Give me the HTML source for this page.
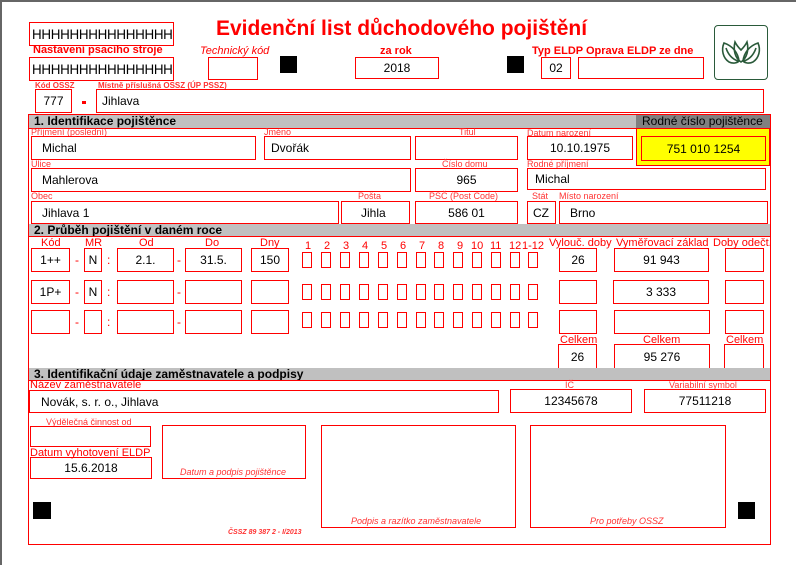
<!DOCTYPE html>
<html><head><meta charset="utf-8"><style>
*{margin:0;padding:0}
body{width:796px;height:565px;background:#fff;position:relative;overflow:hidden;font-family:"Liberation Sans",Arial,sans-serif}
div{position:absolute;box-sizing:border-box}
.b{border:1px solid #f00;font-size:12px;color:#000;display:flex;align-items:center}
.c{justify-content:center}
.p{padding-left:10px}
.l{font-size:9px;color:#f33;white-space:nowrap;line-height:9px}
.lb{font-size:11px;font-weight:bold;color:#f00;white-space:nowrap;line-height:11px}
.lr{font-size:11px;color:#f00;white-space:nowrap;line-height:11px}
.i{font-style:italic}
.k{background:#000}
.h{background:#c0c0c0;font-size:12px;font-weight:bold;color:#000;line-height:13px;padding-left:5px}
.s{border:1px solid #f00;width:10px;height:16px}
.d{color:#f00;font-size:12px}
.hr{height:1px;background:#f00}
</style></head><body>
<div style="left:0;top:0;width:796px;height:2px;background:#666"></div>
<div style="left:0;top:0;width:2px;height:565px;background:#666"></div>

<div class="b" style="left:29px;top:22px;width:145px;height:24px;font-size:13.4px;padding-left:2px;letter-spacing:-0.3px;overflow:hidden">HHHHHHHHHHHHHHHH</div>
<div class="lb" style="left:33px;top:45px">Nastavení psacího stroje</div>
<div class="b" style="left:29px;top:57px;width:145px;height:24px;font-size:13.4px;padding-left:2px;letter-spacing:-0.3px;overflow:hidden">HHHHHHHHHHHHHHHH</div>
<div style="left:216px;top:17px;font-size:21px;font-weight:bold;color:#f00;white-space:nowrap">Evidenční list důchodového pojištění</div>
<div class="lr i" style="left:200px;top:46px">Technický kód</div>
<div class="b" style="left:208px;top:57px;width:50px;height:23px"></div>
<div class="k" style="left:280px;top:56px;width:17px;height:17px"></div>
<div class="lb" style="left:380px;top:46px">za rok</div>
<div class="b c" style="left:355px;top:57px;width:84px;height:22px">2018</div>
<div class="k" style="left:507px;top:56px;width:17px;height:17px"></div>
<div class="lb" style="left:532px;top:46px">Typ ELDP Oprava ELDP ze dne</div>
<div class="b c" style="left:541px;top:57px;width:30px;height:22px">02</div>
<div class="b" style="left:578px;top:57px;width:126px;height:22px"></div>
<div style="left:714px;top:25px;width:54px;height:55px;border:1px solid #2a5a3a;border-radius:4px">
<svg width="52" height="53" viewBox="0 0 52 53"><g fill="none" stroke="#2a5a3a" stroke-width="1.6"><path d="M9 17 C6 24 8 32 14 36 C18 38 22 37 24 35 C23 27 18 20 9 17Z"/><path d="M43 17 C46 24 44 32 38 36 C34 38 30 37 28 35 C29 27 34 20 43 17Z"/><path d="M20 16 C18 24 20 32 26 36 C32 32 34 24 32 16 C30 20 28 22 26 24 C24 22 22 20 20 16Z"/><path d="M11 22 C13 28 17 33 23 35"/><path d="M41 22 C39 28 35 33 29 35"/></g></svg></div>

<div class="l" style="left:35px;top:81px;font-weight:bold;font-size:8px">Kód OSSZ</div>
<div class="l" style="left:98px;top:81px;font-weight:bold;font-size:8px">Místně příslušná OSSZ (ÚP PSSZ)</div>
<div class="b c" style="left:35px;top:89px;width:37px;height:24px">777</div>
<div style="left:82px;top:101px;width:4px;height:3px;background:#f00"></div>
<div class="b p" style="left:96px;top:89px;width:668px;height:24px;padding-left:5px">Jihlava</div>

<div style="left:28px;top:114px;width:743px;height:431px;border:1px solid #f00"></div>
<div class="h" style="left:29px;top:115px;width:741px;height:13px">1. Identifikace pojištěnce</div>
<div style="left:636px;top:115px;width:134px;height:13px;background:#808080;font-size:12px;color:#000;line-height:13px;padding-left:6px;white-space:nowrap">Rodné číslo pojištěnce</div>
<div class="hr" style="left:29px;top:128px;width:741px"></div>
<div style="left:636px;top:128px;width:134px;height:38px;background:#ff0;border:1px solid #f00"></div>
<div class="b c" style="left:641px;top:136px;width:125px;height:25px">751 010 1254</div>

<div class="l" style="left:31px;top:128px">Příjmení (poslední)</div>
<div class="l" style="left:264px;top:128px">Jméno</div>
<div class="l" style="left:459px;top:128px">Titul</div>
<div class="l" style="left:527px;top:129px">Datum narození</div>
<div class="b p" style="left:31px;top:136px;width:225px;height:24px">Michal</div>
<div class="b" style="left:264px;top:136px;width:147px;height:24px;padding-left:6px">Dvořák</div>
<div class="b" style="left:415px;top:136px;width:103px;height:24px"></div>
<div class="b c" style="left:527px;top:136px;width:106px;height:24px">10.10.1975</div>

<div class="l" style="left:31px;top:160px">Ulice</div>
<div class="l" style="left:442px;top:160px">Číslo domu</div>
<div class="l" style="left:527px;top:160px">Rodné příjmení</div>
<div class="b p" style="left:31px;top:168px;width:380px;height:24px">Mahlerova</div>
<div class="b c" style="left:415px;top:168px;width:103px;height:24px">965</div>
<div class="b" style="left:527px;top:168px;width:239px;height:22px;padding-left:7px">Michal</div>

<div class="l" style="left:31px;top:192px">Obec</div>
<div class="l" style="left:358px;top:192px">Pošta</div>
<div class="l" style="left:429px;top:192px">PSČ (Post Code)</div>
<div class="l" style="left:532px;top:192px">Stát</div>
<div class="l" style="left:559px;top:192px">Místo narození</div>
<div class="b p" style="left:31px;top:201px;width:308px;height:23px">Jihlava 1</div>
<div class="b" style="left:341px;top:201px;width:69px;height:23px;padding-left:19px">Jihla</div>
<div class="b c" style="left:415px;top:201px;width:103px;height:23px">586 01</div>
<div class="b" style="left:527px;top:201px;width:29px;height:23px;padding-left:5px">CZ</div>
<div class="b" style="left:559px;top:201px;width:209px;height:23px;padding-left:10px">Brno</div>

<div class="h" style="left:29px;top:224px;width:741px;height:12px;line-height:12px">2. Průběh pojištění v daném roce</div>
<div class="hr" style="left:29px;top:236px;width:741px"></div>
<div class="lr" style="left:41px;top:238px">Kód</div>
<div class="lr" style="left:85px;top:238px">MR</div>
<div class="lr" style="left:139px;top:238px">Od</div>
<div class="lr" style="left:205px;top:238px">Do</div>
<div class="lr" style="left:260px;top:238px">Dny</div>
<div id="nums"></div>
<div class="lr" style="left:549px;top:238px">Vylouč. doby</div>
<div class="lr" style="left:616px;top:238px">Vyměřovací základ</div>
<div class="lr" style="left:713px;top:238px">Doby odečt.</div>

<div class="b c" style="left:31px;top:248px;width:39px;height:24px">1++</div>
<div class="b c" style="left:31px;top:280px;width:39px;height:24px">1P+</div>
<div class="b" style="left:31px;top:310px;width:39px;height:24px"></div>
<div class="b c" style="left:84px;top:248px;width:18px;height:24px">N</div>
<div class="b c" style="left:84px;top:280px;width:18px;height:24px">N</div>
<div class="b" style="left:84px;top:310px;width:18px;height:24px"></div>
<div class="b c" style="left:117px;top:248px;width:57px;height:24px">2.1.</div>
<div class="b" style="left:117px;top:280px;width:57px;height:24px"></div>
<div class="b" style="left:117px;top:310px;width:57px;height:24px"></div>
<div class="b c" style="left:185px;top:248px;width:57px;height:24px">31.5.</div>
<div class="b" style="left:185px;top:280px;width:57px;height:24px"></div>
<div class="b" style="left:185px;top:310px;width:57px;height:24px"></div>
<div class="b c" style="left:251px;top:248px;width:38px;height:24px">150</div>
<div class="b" style="left:251px;top:280px;width:38px;height:24px"></div>
<div class="b" style="left:251px;top:310px;width:38px;height:24px"></div>
<div class="d" style="left:75px;top:253px">-</div><div class="d" style="left:75px;top:285px">-</div><div class="d" style="left:75px;top:315px">-</div>
<div class="d" style="left:107px;top:253px">:</div><div class="d" style="left:107px;top:285px">:</div><div class="d" style="left:107px;top:315px">:</div>
<div class="d" style="left:177px;top:253px">-</div><div class="d" style="left:177px;top:285px">-</div><div class="d" style="left:177px;top:315px">-</div>

<div class="b c" style="left:559px;top:248px;width:38px;height:24px">26</div>
<div class="b" style="left:559px;top:280px;width:38px;height:24px"></div>
<div class="b" style="left:559px;top:310px;width:38px;height:24px"></div>
<div class="b c" style="left:614px;top:248px;width:95px;height:24px">91 943</div>
<div class="b c" style="left:613px;top:280px;width:96px;height:24px">3 333</div>
<div class="b" style="left:614px;top:310px;width:96px;height:24px"></div>
<div class="b" style="left:725px;top:248px;width:39px;height:24px"></div>
<div class="b" style="left:725px;top:280px;width:39px;height:24px"></div>
<div class="b" style="left:725px;top:310px;width:39px;height:24px"></div>
<div class="lr" style="left:560px;top:335px">Celkem</div>
<div class="lr" style="left:643px;top:335px">Celkem</div>
<div class="lr" style="left:726px;top:335px">Celkem</div>
<div class="b c" style="left:558px;top:344px;width:39px;height:25px">26</div>
<div class="b c" style="left:614px;top:344px;width:96px;height:25px">95 276</div>
<div class="b" style="left:724px;top:344px;width:40px;height:25px"></div>

<div id="sq"></div>

<div class="h" style="left:29px;top:368px;width:741px;height:12px;line-height:12px">3. Identifikační údaje zaměstnavatele a podpisy</div>
<div class="hr" style="left:29px;top:380px;width:741px"></div>
<div class="lr" style="left:30px;top:380px">Název zaměstnavatele</div>
<div class="l" style="left:565px;top:381px">IČ</div>
<div class="l" style="left:669px;top:381px">Variabilní symbol</div>
<div class="b" style="left:29px;top:390px;width:470px;height:23px;padding-left:11px">Novák, s. r. o., Jihlava</div>
<div class="b c" style="left:510px;top:389px;width:122px;height:24px">12345678</div>
<div class="b c" style="left:644px;top:389px;width:122px;height:24px">77511218</div>
<div class="l" style="left:46px;top:418px">Výdělečná činnost od</div>
<div class="b" style="left:30px;top:426px;width:121px;height:21px"></div>
<div class="lr" style="left:30px;top:448px">Datum vyhotovení ELDP</div>
<div class="b c" style="left:30px;top:457px;width:122px;height:22px">15.6.2018</div>
<div class="b" style="left:162px;top:425px;width:144px;height:54px"></div>
<div class="l i" style="left:180px;top:468px">Datum a podpis pojištěnce</div>
<div class="b" style="left:321px;top:425px;width:195px;height:103px"></div>
<div class="l i" style="left:351px;top:517px">Podpis a razítko zaměstnavatele</div>
<div class="b" style="left:530px;top:425px;width:196px;height:103px"></div>
<div class="l i" style="left:590px;top:517px">Pro potřeby OSSZ</div>
<div class="k" style="left:33px;top:502px;width:18px;height:17px"></div>
<div class="k" style="left:738px;top:502px;width:17px;height:17px"></div>
<div class="l i" style="left:228px;top:528px;font-size:7px;font-weight:bold">ČSSZ 89 387 2 - I/2013</div>

<script>
var xs=[302,321,340,359,378,397,416,434,453,472,491,510,528],ys=[252,284,312],h='';
ys.forEach(function(y){xs.forEach(function(x){h+='<div class="s" style="left:'+x+'px;top:'+y+'px"></div>'})});
document.getElementById('sq').outerHTML=h;
var lx=[305,324,343,362,381,400,419,438,457,471,490,509,522],lt=['1','2','3','4','5','6','7','8','9','10','11','12','1-12'],n='';
lx.forEach(function(x,i){n+='<div class="lr" style="left:'+x+'px;top:241px">'+lt[i]+'</div>'});
document.getElementById('nums').outerHTML=n;
</script>
</body></html>
